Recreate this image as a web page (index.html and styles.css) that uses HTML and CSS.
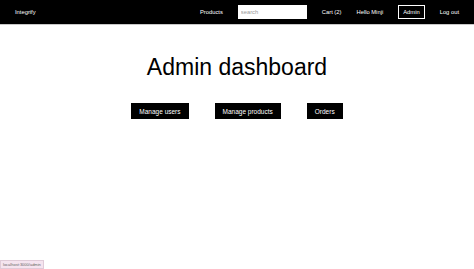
FILE: index.html
```html
<!DOCTYPE html>
<html lang="en">
<head>
<meta charset="utf-8"/>
<meta content="width=device-width, initial-scale=1.0" name="viewport"/>
<title>Admin dashboard</title>
<link rel="stylesheet" href="styles.css">
</head>
<body>
<nav class="navbar">
  <a class="brand" href="#">Integrify</a>
  <div class="nav-links">
    <a href="#">Products</a>
    <input class="search" placeholder="search" type="text"/>
    <a href="#">Cart (2)</a>
    <span class="greeting">Hello Minji</span>
    <a class="admin-link" href="#">Admin</a>
    <a href="#">Log out</a>
  </div>
</nav>
<main class="dashboard">
  <h1>Admin dashboard</h1>
  <div class="actions">
    <button>Manage users</button>
    <button>Manage products</button>
    <button>Orders</button>
  </div>
</main>
<div class="status">localhost:3000/admin</div>
</body>
</html>
```

FILE: styles.css
```css
body {
    margin: 0;
    font-family: 'Liberation Sans', Arial, sans-serif;
    background-color: #ffffff;
    color: #000;
}

.navbar {
    height: 24px;
    background-color: #000;
    border-bottom: 1px solid #c8c8c8;
    display: flex;
    align-items: center;
    justify-content: space-between;
    padding: 0 15px;
    font-size: 5.8px;
}

.navbar a, .navbar span {
    color: #fff;
    text-decoration: none;
}

.nav-links {
    display: flex;
    align-items: center;
    gap: 15px;
}

.search {
    width: 69px;
    height: 14px;
    box-sizing: border-box;
    border: none;
    padding: 0 3px;
    font-size: 5.8px;
    font-family: inherit;
}

.search::placeholder {
    color: #999;
}

.admin-link {
    border: 1px solid #fff;
    padding: 3px 4px;
}

.dashboard {
    text-align: center;
}

h1 {
    font-size: 23px;
    font-weight: normal;
    margin: 29px 0 22px;
}

.actions {
    display: flex;
    justify-content: center;
    gap: 26px;
}

button {
    background-color: #000;
    color: #fff;
    border: none;
    height: 16px;
    padding: 0 8px;
    font-family: inherit;
    font-size: 6.5px;
}

.status {
    position: fixed;
    left: 0;
    bottom: 0;
    background-color: #f5e4ef;
    border: 1px solid #e0cbd8;
    color: #666;
    font-size: 4px;
    padding: 1px 2px;
}
```
